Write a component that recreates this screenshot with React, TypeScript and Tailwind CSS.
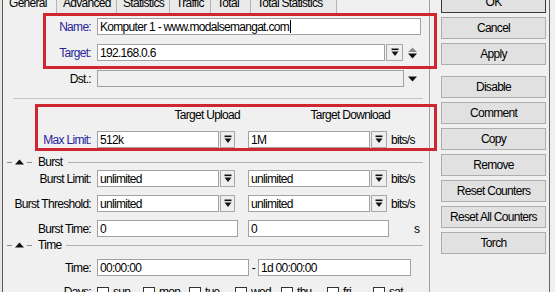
import React from "react";

const DropIcon = () => (
  <svg width="8" height="9" viewBox="0 0 8 9">
    <rect x="0.5" y="0.5" width="7" height="1.6" fill="#111" />
    <path d="M0.5 3.5 H7.5 L4 8 Z" fill="#111" />
  </svg>
);

const DropBtn = ({ w }: { w: string }) => (
  <div className={`${w} h-[17px] ml-[1px] shrink-0 border border-[#a8a8a8] bg-[#efefef] flex items-center justify-center`}>
    <DropIcon />
  </div>
);

const Inp = ({ w, text, gray, cursor }: { w: string; text?: string; gray?: boolean; cursor?: boolean }) => (
  <div
    className={`${w} h-[17px] shrink-0 border border-[#a2a2a2] ${gray ? "bg-[#f0f0f0]" : "bg-white"} pl-[2px] flex items-center whitespace-nowrap overflow-hidden`}
  >
    <span>{text}</span>
    {cursor && <span className="ml-[1px] w-px h-[13px] bg-black" />}
  </div>
);

const Row = ({ mt, label, blue, children }: { mt: string; label: string; blue?: boolean; children?: React.ReactNode }) => (
  <div className={`${mt} flex items-center h-[17px] shrink-0`}>
    <div className={`w-[88px] shrink-0 text-right whitespace-nowrap ${blue ? "text-[#24249c]" : "text-black"}`}>{label}</div>
    <div className="ml-[6px] flex items-center">{children}</div>
  </div>
);

const Section = ({ mt, title }: { mt: string; title: string }) => (
  <div className={`${mt} flex items-center h-[14px] shrink-0`}>
    <div className="ml-[4px] w-[5px] h-px bg-[#8a8a8a]" />
    <svg className="ml-[3px]" width="9" height="6" viewBox="0 0 9 6">
      <path d="M0 5.5 L4.5 0.5 L9 5.5 Z" fill="#111" />
    </svg>
    <div className="ml-[3px] w-[5px] h-px bg-[#8a8a8a]" />
    <div className="ml-[6px]">{title}</div>
    <div className="ml-[5px] mr-[6px] flex-1 h-px bg-[#b0b0b0]" />
  </div>
);

const LimitRow = ({ mt, label, blue, a, b }: { mt: string; label: string; blue?: boolean; a: string; b: string }) => (
  <Row mt={mt} label={label} blue={blue}>
    <Inp w="w-[122px]" text={a} />
    <DropBtn w="w-[15px]" />
    <div className="ml-[13px]">
      <Inp w="w-[122px]" text={b} />
    </div>
    <DropBtn w="w-[16px]" />
    <span className="ml-[4px]">bits/s</span>
  </Row>
);

const Btn = ({ label, mt, ok }: { label: string; mt: string; ok?: boolean }) => (
  <div
    className={`${mt} h-[22px] w-[105px] shrink-0 border ${ok ? "border-[#3a3a3a]" : "border-[#adadad]"} bg-[#e1e1e1] flex items-center justify-center whitespace-nowrap`}
  >
    {label}
  </div>
);

const tabs = [
  { t: "General", w: "w-[54px]", sel: true },
  { t: "Advanced", w: "w-[60px]" },
  { t: "Statistics", w: "w-[53px]" },
  { t: "Traffic", w: "w-[41px]" },
  { t: "Total", w: "w-[40px]" },
  { t: "Total Statistics", w: "w-[86px]" },
];

const days = ["sun", "mon", "tue", "wed", "thu", "fri", "sat"];

export default function App() {
  return (
    <div className="relative w-[555px] h-[292px] overflow-hidden bg-[#f0f0f0] flex font-[family-name:'Liberation_Sans',Arial,sans-serif] text-[12px] leading-[14px] tracking-[-0.7px] text-black">
      <div className="w-[2px] shrink-0 bg-[#e6e6e6]" />
      <div className="w-[1px] shrink-0 bg-[#5a5a5a]" />

      {/* main panel */}
      <div className="w-[427px] shrink-0 border-r border-[#a0a0a0] flex flex-col">
        <div className="-mt-[6px] h-[21px] flex shrink-0">
          {tabs.map((tab) => (
            <div
              key={tab.t}
              className={`${tab.w} h-[21px] shrink-0 pt-[1px] pl-[6px] whitespace-nowrap border-r border-t ${
                tab.sel ? "bg-[#f0f0f0] border-[#b5b5b5]" : "bg-[#e9e9e9] border-b border-[#b5b5b5]"
              }`}
            >
              {tab.t}
            </div>
          ))}
          <div className="flex-1 border-b border-[#b5b5b5]" />
        </div>

        <Row mt="mt-[3px]" label="Name:" blue>
          <Inp w="w-[324px]" text="Komputer 1 - www.modalsemangat.com" cursor />
        </Row>
        <Row mt="mt-[9px]" label="Target:" blue>
          <Inp w="w-[288px]" text="192.168.0.6" />
          <DropBtn w="w-[17px]" />
          <svg className="ml-[5px]" width="9" height="12" viewBox="0 0 9 12">
            <path d="M0 5 L4.5 0.5 L9 5 Z" fill="#8c8c8c" />
            <path d="M0 6.5 H9 L4.5 11.5 Z" fill="#111" />
          </svg>
        </Row>
        <Row mt="mt-[9px]" label="Dst.:">
          <Inp w="w-[307px]" gray />
          <svg className="ml-[4px]" width="9" height="6" viewBox="0 0 9 6">
            <path d="M0 0.5 H9 L4.5 5.5 Z" fill="#111" />
          </svg>
        </Row>

        <div className="mt-[11px] ml-[10px] w-[410px] h-px bg-[#c4c4c4] shrink-0" />

        <div className="mt-[9px] flex h-[14px] shrink-0">
          <div className="w-[94px] shrink-0" />
          <div className="w-[143px] shrink-0 text-right whitespace-nowrap">Target Upload</div>
          <div className="w-[150px] shrink-0 text-right whitespace-nowrap">Target Download</div>
        </div>

        <LimitRow mt="mt-[9px]" label="Max Limit:" blue a="512k" b="1M" />

        <Section mt="mt-[7px]" title="Burst" />
        <LimitRow mt="mt-[1px]" label="Burst Limit:" a="unlimited" b="unlimited" />
        <LimitRow mt="mt-[8px]" label="Burst Threshold:" a="unlimited" b="unlimited" />
        <Row mt="mt-[8px]" label="Burst Time:">
          <Inp w="w-[141px]" text="0" />
          <div className="ml-[10px]">
            <Inp w="w-[141px]" text="0" />
          </div>
          <span className="ml-[25px]">s</span>
        </Row>

        <Section mt="mt-[1px]" title="Time" />
        <Row mt="mt-[7px]" label="Time:">
          <Inp w="w-[152px]" text="00:00:00" />
          <div className="w-[9px] text-center">-</div>
          <Inp w="w-[153px]" text="1d 00:00:00" />
        </Row>

        <div className="mt-[9px] flex items-start h-[17px] shrink-0">
          <div className="w-[88px] shrink-0 text-right">Days:</div>
          <div className="ml-[6px] flex items-start">
            {days.map((d) => (
              <div key={d} className="w-[46px] shrink-0 flex items-start">
                <div className="mt-[2px] w-[12px] h-[12px] border border-[#333] bg-white shrink-0" />
                <span className="ml-[4px]">{d}</span>
              </div>
            ))}
          </div>
        </div>
      </div>

      <div className="w-[11px] shrink-0" />

      {/* buttons */}
      <div className="w-[105px] shrink-0 flex flex-col">
        <Btn mt="-mt-[9px]" label="OK" ok />
        <Btn mt="mt-[4px]" label="Cancel" />
        <Btn mt="mt-[4px]" label="Apply" />
        <Btn mt="mt-[11px]" label="Disable" />
        <Btn mt="mt-[4px]" label="Comment" />
        <Btn mt="mt-[4px]" label="Copy" />
        <Btn mt="mt-[4px]" label="Remove" />
        <Btn mt="mt-[4px]" label="Reset Counters" />
        <Btn mt="mt-[4px]" label="Reset All Counters" />
        <Btn mt="mt-[4px]" label="Torch" />
      </div>

      <div className="w-[3px] shrink-0" />
      <div className="w-[1px] shrink-0 bg-[#646464]" />
      <div className="flex-1 bg-[#f0f0f0]" />

      {/* red annotation boxes */}
      <div className="absolute left-[43px] top-[13px] w-[394px] h-[56px] border-[3px] border-[#cf2731] pointer-events-none" />
      <div className="absolute left-[35px] top-[104px] w-[402px] h-[47px] border-[3px] border-[#cf2731] pointer-events-none" />
    </div>
  );
}
